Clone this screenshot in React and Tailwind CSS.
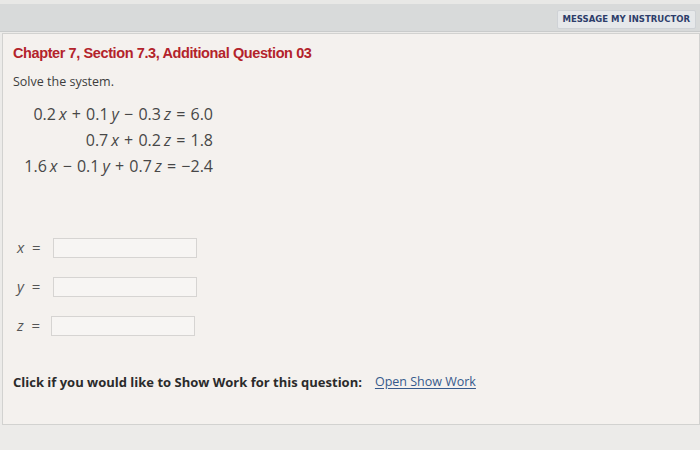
import React from 'react';

const eqs = [
  ['0.2', 'x', ' + 0.1', 'y', ' − 0.3', 'z', ' = 6.0'],
  ['0.7', 'x', ' + 0.2', 'z', ' = 1.8'],
  ['1.6', 'x', ' − 0.1', 'y', ' + 0.7', 'z', ' = −2.4'],
];

function Eq({ parts }) {
  return (
    <div className="h-[26px] leading-[26px] [word-spacing:1px]">
      {parts.map((p, i) =>
        i % 2 === 1 ? (
          <i key={i} className="pl-[3px]">{p}</i>
        ) : (
          <span key={i}>{p}</span>
        )
      )}
    </div>
  );
}

function Answer({ label, shift }) {
  return (
    <div className="flex items-center h-[20px]">
      <span className="w-[53px] pl-[17px] text-[15px] text-[#555] [word-spacing:4px]"><i>{label}</i> =</span>
      <div className={`h-[20px] w-[144px] border border-[#d6d4d2] bg-[#f7f5f3] ${shift}`} />
    </div>
  );
}

export default function App() {
  return (
    <div className="w-[700px] h-[450px] bg-[#ecebe9] overflow-hidden" style={{ fontFamily: '"Open Sans", sans-serif' }}>
      <div className="h-[4px] bg-[#e8e8e6]" />
      <div className="h-[28px] bg-[#d8dada] border-b border-[#c9cbcb] flex items-start justify-end pr-[4px] pt-[6px]">
        <div className="h-[19px] px-[5px] bg-[#e6e8ea] border border-[#cfd2d6] rounded-[2px] text-[8.5px] font-bold text-[#2d3d6b] leading-[17px]" style={{ fontFamily: '"DejaVu Sans", Verdana, sans-serif' }}>
          MESSAGE MY INSTRUCTOR
        </div>
      </div>
      <div className="ml-[2px] mt-[1px] h-[392px] bg-[#f4f1ee] border border-[#d2d2d0] pl-[10px] pt-[9px]">
        <div className="font-bold text-[#b3232b] tracking-[-0.4px]" style={{ fontFamily: '"Liberation Sans", Arial, sans-serif', fontSize: '14.5px' }}>
          Chapter 7, Section 7.3, Additional Question 03
        </div>
        <div className="mt-[8px] text-[12.5px] text-[#3d3d3d]">Solve the system.</div>
        <div className="mt-[9px] w-[200px] flex flex-col items-end text-[16px] text-[#474747]">
          {eqs.map((e, i) => <Eq key={i} parts={e} />)}
        </div>
        <div className="mt-[59px] -ml-[13px] flex flex-col gap-[19px]">
          <Answer label="x" shift="" />
          <Answer label="y" shift="" />
          <Answer label="z" shift="-ml-[2px]" />
        </div>
        <div className="mt-[37px] flex items-center text-[13px]">
          <span className="font-bold text-[#2b2b2b]">Click if you would like to Show Work for this question:</span>
          <span className="ml-[13px] text-[12.5px] text-[#365a8c] underline underline-offset-2">Open Show Work</span>
        </div>
      </div>
    </div>
  );
}
